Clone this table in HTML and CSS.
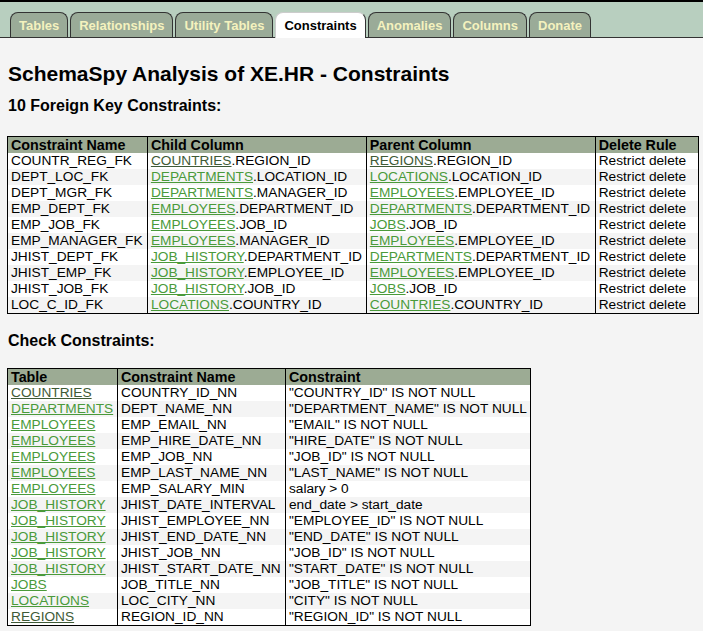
FILE: index.html
```html
<!DOCTYPE html>
<html>
<head>
<meta charset="utf-8">
<title>SchemaSpy - Constraints</title>
<link rel="stylesheet" href="styles.css">
</head>
<body>
<div class="tabbar">
  <ul class="tabs">
    <li class="tab">Tables</li>
    <li class="tab">Relationships</li>
    <li class="tab">Utility Tables</li>
    <li class="tab active">Constraints</li>
    <li class="tab">Anomalies</li>
    <li class="tab">Columns</li>
    <li class="tab">Donate</li>
  </ul>
</div>
<div class="content">
  <h1 class="title">SchemaSpy Analysis of XE.HR - Constraints</h1>
  <h2 class="sub">10 Foreign Key Constraints:</h2>
  <table class="grid fk">
    <thead>
      <tr><th class="f1">Constraint Name</th><th class="f2">Child Column</th><th class="f3">Parent Column</th><th class="f4">Delete Rule</th></tr>
    </thead>
    <tbody>
      <tr><td>COUNTR_REG_FK</td><td><a class="v">COUNTRIES</a>.REGION_ID</td><td><a class="v">REGIONS</a>.REGION_ID</td><td>Restrict delete</td></tr>
      <tr><td>DEPT_LOC_FK</td><td><a>DEPARTMENTS</a>.LOCATION_ID</td><td><a>LOCATIONS</a>.LOCATION_ID</td><td>Restrict delete</td></tr>
      <tr><td>DEPT_MGR_FK</td><td><a>DEPARTMENTS</a>.MANAGER_ID</td><td><a>EMPLOYEES</a>.EMPLOYEE_ID</td><td>Restrict delete</td></tr>
      <tr><td>EMP_DEPT_FK</td><td><a>EMPLOYEES</a>.DEPARTMENT_ID</td><td><a>DEPARTMENTS</a>.DEPARTMENT_ID</td><td>Restrict delete</td></tr>
      <tr><td>EMP_JOB_FK</td><td><a>EMPLOYEES</a>.JOB_ID</td><td><a>JOBS</a>.JOB_ID</td><td>Restrict delete</td></tr>
      <tr><td>EMP_MANAGER_FK</td><td><a>EMPLOYEES</a>.MANAGER_ID</td><td><a>EMPLOYEES</a>.EMPLOYEE_ID</td><td>Restrict delete</td></tr>
      <tr><td>JHIST_DEPT_FK</td><td><a>JOB_HISTORY</a>.DEPARTMENT_ID</td><td><a>DEPARTMENTS</a>.DEPARTMENT_ID</td><td>Restrict delete</td></tr>
      <tr><td>JHIST_EMP_FK</td><td><a>JOB_HISTORY</a>.EMPLOYEE_ID</td><td><a>EMPLOYEES</a>.EMPLOYEE_ID</td><td>Restrict delete</td></tr>
      <tr><td>JHIST_JOB_FK</td><td><a>JOB_HISTORY</a>.JOB_ID</td><td><a>JOBS</a>.JOB_ID</td><td>Restrict delete</td></tr>
      <tr><td>LOC_C_ID_FK</td><td><a>LOCATIONS</a>.COUNTRY_ID</td><td><a>COUNTRIES</a>.COUNTRY_ID</td><td>Restrict delete</td></tr>
    </tbody>
  </table>
  <h2 class="sub check">Check Constraints:</h2>
  <table class="grid ck">
    <thead>
      <tr><th class="c1">Table</th><th class="c2">Constraint Name</th><th class="c3">Constraint</th></tr>
    </thead>
    <tbody>
      <tr><td><a class="v">COUNTRIES</a></td><td>COUNTRY_ID_NN</td><td>"COUNTRY_ID" IS NOT NULL</td></tr>
      <tr><td><a>DEPARTMENTS</a></td><td>DEPT_NAME_NN</td><td>"DEPARTMENT_NAME" IS NOT NULL</td></tr>
      <tr><td><a>EMPLOYEES</a></td><td>EMP_EMAIL_NN</td><td>"EMAIL" IS NOT NULL</td></tr>
      <tr><td><a>EMPLOYEES</a></td><td>EMP_HIRE_DATE_NN</td><td>"HIRE_DATE" IS NOT NULL</td></tr>
      <tr><td><a>EMPLOYEES</a></td><td>EMP_JOB_NN</td><td>"JOB_ID" IS NOT NULL</td></tr>
      <tr><td><a>EMPLOYEES</a></td><td>EMP_LAST_NAME_NN</td><td>"LAST_NAME" IS NOT NULL</td></tr>
      <tr><td><a>EMPLOYEES</a></td><td>EMP_SALARY_MIN</td><td>salary &gt; 0</td></tr>
      <tr><td><a>JOB_HISTORY</a></td><td>JHIST_DATE_INTERVAL</td><td>end_date &gt; start_date</td></tr>
      <tr><td><a>JOB_HISTORY</a></td><td>JHIST_EMPLOYEE_NN</td><td>"EMPLOYEE_ID" IS NOT NULL</td></tr>
      <tr><td><a>JOB_HISTORY</a></td><td>JHIST_END_DATE_NN</td><td>"END_DATE" IS NOT NULL</td></tr>
      <tr><td><a>JOB_HISTORY</a></td><td>JHIST_JOB_NN</td><td>"JOB_ID" IS NOT NULL</td></tr>
      <tr><td><a>JOB_HISTORY</a></td><td>JHIST_START_DATE_NN</td><td>"START_DATE" IS NOT NULL</td></tr>
      <tr><td><a>JOBS</a></td><td>JOB_TITLE_NN</td><td>"JOB_TITLE" IS NOT NULL</td></tr>
      <tr><td><a>LOCATIONS</a></td><td>LOC_CITY_NN</td><td>"CITY" IS NOT NULL</td></tr>
      <tr><td><a class="v">REGIONS</a></td><td>REGION_ID_NN</td><td>"REGION_ID" IS NOT NULL</td></tr>
    </tbody>
  </table>
</div>
</body>
</html>
```
FILE: styles.css
```css
html, body {
  margin: 0;
  padding: 0;
  background: #f4f4f4;
  font-family: "Liberation Sans", Arial, sans-serif;
  color: #000;
}
.tabbar {
  background: #b8cfbf;
  border-top: 2px solid #000;
  border-bottom: 1px solid #333;
  height: 35px;
}
.tabs {
  list-style: none;
  margin: 0;
  padding: 0 0 0 10px;
  display: flex;
  gap: 2px;
  height: 100%;
  align-items: flex-end;
}
.tab {
  background: #9aab98;
  color: #f4f2be;
  font-weight: bold;
  font-size: 13px;
  height: 25px;
  box-sizing: border-box;
  padding: 5px 8px 0 8px;
  border: 1px solid #333;
  border-bottom: none;
  border-radius: 8px 8px 0 0;
  position: relative;
}
.tab.active {
  background: #fff;
  color: #000;
  height: 26px;
  top: 1px;
  border-color: #ccc #333 #fff #ccc;
}
.content {
  padding: 0 4px 0 7px;
}
.title {
  font-size: 21px;
  font-weight: bold;
  margin: 24px 0 0 1px;
  line-height: 24px;
}
.sub {
  font-size: 16px;
  font-weight: bold;
  margin: 10px 0 0 1px;
  line-height: 20px;
}
.sub.check {
  margin-top: 17px;
}
.grid {
  border-collapse: collapse;
  border: 1px solid #000;
  margin-top: 20px;
  font-size: 13.7px;
}
.ck {
  margin-top: 17px;
}
.grid th {
  background: #9cab94;
  text-align: left;
  font-weight: bold;
  font-size: 14.3px;
  padding: 0 3px;
  height: 16px;
  line-height: 16px;
  border-left: 1px solid #000;
}
.grid td {
  padding: 0 3px;
  height: 16px;
  line-height: 16px;
  border-left: 1px solid #000;
  white-space: nowrap;
}
.grid tbody tr:nth-child(odd) td {
  background: #fff;
}
.grid tbody tr:nth-child(even) td {
  background: #f4f4f4;
}
.grid a {
  color: #4a9a3a;
  text-decoration: underline;
}
.grid a.v {
  color: #3e5a36;
}
.f1 { width: 133px; }
.f2 { width: 212px; }
.f3 { width: 222px; }
.f4 { width: 97px; }
.c1 { width: 103px; }
.c2 { width: 161px; }
.c3 { width: 238px; }
```
